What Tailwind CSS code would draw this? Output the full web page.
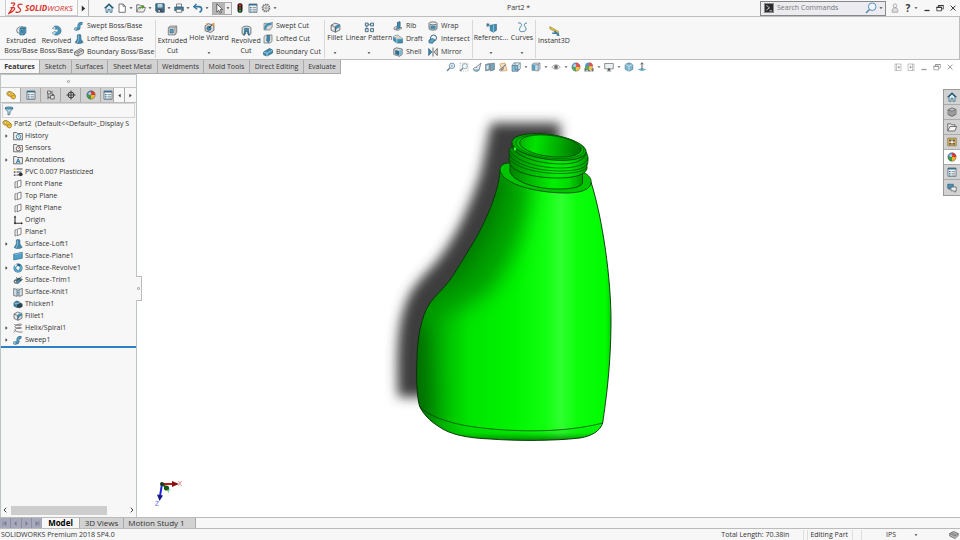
<!DOCTYPE html>
<html lang="en">
<head>
    <meta charset="UTF-8">
    <meta name="viewport" content="width=device-width, initial-scale=1.0">
    <title>Part2 * - SOLIDWORKS Premium 2018</title>
    <script src="https://cdn.jsdelivr.net/npm/@tailwindcss/browser@4"></script>
</head>
<body class="flex min-h-screen flex-col overflow-x-hidden bg-[#f7f7f7] font-['Open_Sans','Noto_Sans',sans-serif] text-[7px] leading-[10px] text-[#333]">

    <!-- Icon sprite -->
    <svg class="hidden">
        <symbol id="caret" viewBox="0 0 4 4"><path d="M.5 1.2h3L2 3z" fill="#444"/></symbol>
        <symbol id="right" viewBox="0 0 4 6"><path d="M.5 .5v5L3.5 3z" fill="#333"/></symbol>
        <symbol id="left" viewBox="0 0 4 6"><path d="M3.5 .5v5L.5 3z" fill="#333"/></symbol>
        <symbol id="home" viewBox="0 0 10 10"><path d="M2 5v4.300h2V6.500h2v2.800h2V5L5 2z" fill="#d9e8ef" stroke="#356b85" stroke-width=".8"/><path d="M.6 5.300 5 1l4.400 4.300" fill="none" stroke="#245a77" stroke-width="1.200"/></symbol>
        <symbol id="new" viewBox="0 0 10 10"><path d="M2 1h4l2.300 2.300V9.300H2z" fill="#fff" stroke="#555" stroke-width=".8"/><path d="M6 1v2.300h2.300" fill="none" stroke="#555" stroke-width=".7"/></symbol>
        <symbol id="open" viewBox="0 0 10 10"><path d="M.7 9V1.800h3l1 1h3V4.500" fill="#eee" stroke="#555" stroke-width=".8"/><path d="M.7 9 2.700 4.500h6.800L7.800 9z" fill="#eee" stroke="#555" stroke-width=".7"/><path d="M3.500 7c0-2.500 1-3.500 2.500-3.700V2L8.500 4 6 6V4.800c-1 .2-1.600 1-2.500 2.200z" fill="#4f9e2c"/></symbol>
        <symbol id="save" viewBox="0 0 10 10"><path d="M.8 .8h8.400v8.400H2L.8 8z" fill="#3e7390" stroke="#2b4a5c" stroke-width=".8"/><path d="M2.500 1h5v3.500h-5z" fill="#b7d3e1"/><path d="M2.800 6.200h4.500V9H2.800z" fill="#4b4b4b"/><path d="M3.500 6.900h1.200v2H3.500z" fill="#eee"/></symbol>
        <symbol id="print" viewBox="0 0 10 10"><path d="M2.500 1h5v3h-5z" fill="#fff" stroke="#555" stroke-width=".7"/><path d="M.6 4h8.800v3.700H.6z" fill="#3f81a3" stroke="#2d5469" stroke-width=".6"/><path d="M2.300 6.300h5.400v3H2.300z" fill="#fff" stroke="#555" stroke-width=".7"/></symbol>
        <symbol id="undo" viewBox="0 0 10 10"><path d="M3.500 1 .7 3.700l3.500 2.500" fill="none" stroke="#3277a3" stroke-width="1.400"/><path d="M1.300 3.600h4.500c3.600 0 3.800 4.200 .7 5.600" fill="none" stroke="#3277a3" stroke-width="1.600"/></symbol>
        <symbol id="cursor" viewBox="0 0 10 10"><path d="M3 .8v7.500l1.800-1.700 1.200 2.700 1.200-.6-1.200-2.600 2.300-.1z" fill="#fff" stroke="#444" stroke-width=".7"/></symbol>
        <symbol id="traffic" viewBox="0 0 10 10"><rect x="2.500" y=".3" width="5" height="9.400" rx="2" fill="#222"/><circle cx="5" cy="2.400" r="1.200" fill="#e22"/><circle cx="5" cy="5" r="1.100" fill="#665c22"/><circle cx="5" cy="7.600" r="1.200" fill="#3a3"/></symbol>
        <symbol id="list" viewBox="0 0 10 10"><path d="M1 1h8v8.300H1z" fill="#f4f4f4" stroke="#4e6673" stroke-width=".8"/><path d="M1 1h8v1.500H1z" fill="#3b6f8c"/><path d="M2 4h1.500v1H2zM2 5.800h1.500v1H2zM2 7.500h1.500v1H2z" fill="#2f79a3"/><path d="M4.500 4.500H8M4.500 6.300H8M4.500 8H8" stroke="#4e6673" stroke-width=".6"/></symbol>
        <symbol id="gear" viewBox="0 0 10 10"><circle cx="5" cy="5" r="3.600" fill="none" stroke="#777" stroke-width="1.500" stroke-dasharray="1.500 .7"/><circle cx="5" cy="5" r="3" fill="#f7f7f7" stroke="#777" stroke-width=".7"/><circle cx="5" cy="5" r="1.200" fill="none" stroke="#777" stroke-width=".8"/></symbol>
        <symbol id="magnifier" viewBox="0 0 12 12"><circle cx="7.200" cy="4.700" r="3.800" fill="#eef5fa" stroke="#5a8fb5" stroke-width="1"/><path d="M4.500 7.500 1 11" stroke="#5a8fb5" stroke-width="1.600"/></symbol>
        <symbol id="prompt" viewBox="0 0 10 10"><path d="M0 0h10v10H0z" fill="#8c8c8c"/><path d="M1 1h8v8H1z" fill="#2b2b2b"/><path d="m2.500 2.500 3 2.300-3 2.300M5.500 7.800h2.500" fill="none" stroke="#ddd" stroke-width=".9"/></symbol>
        <symbol id="user" viewBox="0 0 10 10"><circle cx="5" cy="2.800" r="1.900" fill="#eee" stroke="#999" stroke-width=".7"/><path d="M2.200 9.300V7c0-3 5.600-3 5.600 0v2.300z" fill="#ddd" stroke="#999" stroke-width=".7"/></symbol>
        <symbol id="min" viewBox="0 0 10 10"><path d="M2.500 7.500h5" stroke="currentColor" stroke-width="1.300"/></symbol>
        <symbol id="restore" viewBox="0 0 10 10"><path d="M3.500 4V2.500H8.300V6H6.500M1.800 4.300h4.700v3.500H1.800z" fill="none" stroke="currentColor" stroke-width=".8"/><path d="M1.500 4.300h5.300M3.200 2.500h5.300" stroke="currentColor" stroke-width="1.200"/></symbol>
        <symbol id="close" viewBox="0 0 10 10"><path d="m2.700 2.700 4.800 4.800m0-4.800L2.700 7.500" stroke="currentColor" stroke-width="1"/></symbol>
        <symbol id="dock-l" viewBox="0 0 10 10"><path d="M2 2h6v6.500H2zM3.500 2v6.500" fill="none" stroke="#aaa" stroke-width=".7"/><path d="M6.500 3.800v3L4.500 5.300z" fill="#888"/></symbol>
        <symbol id="dock-r" viewBox="0 0 10 10"><path d="M2 2h6v6.500H2zM6.500 2v6.500" fill="none" stroke="#aaa" stroke-width=".7"/><path d="M3.800 3.800v3l2-1.500z" fill="#888"/></symbol>

        <symbol id="extrude" viewBox="0 0 10 10"><path d="M.8 3.500 3 1.800h3v6H3.500L.8 6.500z" fill="#dfe9ee" stroke="#555" stroke-width=".6"/><path d="m3.500 3.300 1.700-1.600 3.800.4v5L7.300 9H3.500z" fill="#5aa3c4" stroke="#2d6380" stroke-width=".6"/><path d="M3.500 3.300h3.800L9 2.100M7.300 3.300V9" fill="none" stroke="#2d6380" stroke-width=".6"/><path d="M4.400 4.500h2v2.800h-2z" fill="#3b7fa1"/></symbol>
        <symbol id="revolve" viewBox="0 0 10 10"><path d="M3 1.200C7 0 9.600 3 9 6.200 8 9.800 3 10 1 7.300l2.600-1.500c1 1.200 2.700.9 2.900-.4.200-1.400-1-2-2.300-1.600z" fill="#4c98bd" stroke="#2d6380" stroke-width=".6"/><path d="M1 7.300 3.600 5.800l.8 1.500L2.500 9z" fill="#b9dbea"/><path d="M1 3 4 1.200 4.300 4z" fill="#d9ecf4" stroke="#2d6380" stroke-width=".4"/></symbol>
        <symbol id="sweep" viewBox="0 0 10 10"><path d="M1.700 8c3 .5 3.600-.8 3.300-2.800-.2-2.200 1-3 3.300-2.700" fill="none" stroke="#2d6380" stroke-width="3"/><path d="M1.700 7.900c3 .5 3.500-.8 3.300-2.800-.2-2 1-2.900 3.300-2.600" fill="none" stroke="#4c98bd" stroke-width="2"/><circle cx="1.700" cy="7.900" r="1.400" fill="#9acbe0" stroke="#2d6380" stroke-width=".5"/></symbol>
        <symbol id="loft" viewBox="0 0 10 10"><path d="M3.300 1c1-.7 2.600-.7 3.600 0v4l2.300 3.300c-2 1.700-6 1.700-8 .2L3.300 5z" fill="#4689ab" stroke="#2d6380" stroke-width=".6"/><path d="M4.500 1.500v4.300L3 9" fill="none" stroke="#8fc5dd" stroke-width=".8"/></symbol>
        <symbol id="boundary" viewBox="0 0 10 10"><path d="M.6 5 6.500 1.500 9.500 3v3L4 9 .6 7.800z" fill="#ddd" stroke="#555" stroke-width=".7"/><path d="M.6 5 4 6.300 9.500 3M4 6.300V9M2.500 4 6 5.200M4.500 2.800 8 4" fill="none" stroke="#555" stroke-width=".6"/></symbol>
        <symbol id="boundary-cut" viewBox="0 0 10 10"><path d="M.6 5 6.500 1.500 9.500 3v3L4 9 .6 7.800z" fill="#3f8db3" stroke="#245a77" stroke-width=".7"/><path d="M.6 5 4 6.300 9.500 3M4 6.300V9" fill="none" stroke="#c9e4ef" stroke-width=".7"/></symbol>
        <symbol id="cut" viewBox="0 0 10 10"><path d="M1.200 2.500 2.800 1h6v6L7.300 9H1.200z" fill="#e3e3e3" stroke="#666" stroke-width=".7"/><path d="M1.200 2.500h6L8.800 1M7.300 2.500V9" fill="none" stroke="#666" stroke-width=".6"/><path d="M2.700 4h3v3.300h-3z" fill="#5aa3c4" stroke="#2d6380" stroke-width=".6"/></symbol>
        <symbol id="hole" viewBox="0 0 10 10"><path d="M1 3.500 4 1.500l5 1.500v4.500L6 9.500 1 8z" fill="#d8d8d8" stroke="#555" stroke-width=".7"/><circle cx="4.500" cy="5.800" r="1.900" fill="#3f8db3" stroke="#245a77" stroke-width=".6"/><path d="M4.500 5.500 8.500 1.200" stroke="#333" stroke-width=".9"/><path d="m6.500 2 3-1.500v3zM2 .7l1.500 1L2 2.700z" fill="#e89a3c"/></symbol>
        <symbol id="revcut" viewBox="0 0 10 10"><path d="M1 2.500C2.500.6 7.500.6 9 2.500V8L6.800 9.300V6H3.200v3.300L1 8z" fill="#d5e5ed" stroke="#555" stroke-width=".7"/><path d="M3.200 3h3.600v3l1 3.300L6 8V5H4.300v3L2.300 9.300l.9-3.300z" fill="#3f8db3" stroke="#245a77" stroke-width=".5"/></symbol>
        <symbol id="sweptcut" viewBox="0 0 10 10"><path d="M1 2.300h7.500L9.200 1v5L7 9H1z" fill="#d8d8d8" stroke="#666" stroke-width=".6"/><path d="M2.200 8.500c0-4 1.500-5 6.300-5.800" fill="none" stroke="#3f8db3" stroke-width="2.200"/></symbol>
        <symbol id="loftcut" viewBox="0 0 10 10"><path d="M1 2.500 3 1h6v6.500L7 9H1z" fill="#e3e3e3" stroke="#666" stroke-width=".7"/><path d="M4 1.500h2.700V6l-1.300 2.700L3.700 7z" fill="#3f8db3" stroke="#245a77" stroke-width=".6"/></symbol>
        <symbol id="fillet" viewBox="0 0 10 10"><path d="M1 3 4.500 1 9 2.500v4.700L5 9.300 1 7.500z" fill="#e4e4e4" stroke="#555" stroke-width=".7"/><path d="M4.300 5.500c0-2 1.500-3.500 4.500-3v2.500C7 5 5.500 6 5 9L4.300 8z" fill="#3f8db3"/><path d="M1 3c1.500.7 3 1 4 2v4.300" fill="none" stroke="#555" stroke-width=".7"/></symbol>
        <symbol id="pattern" viewBox="0 0 10 10"><g fill="#d4e5ed" stroke="#3b6076" stroke-width=".8"><path d="M1.200 1h2.600v2.600H1.200zM1.200 6h2.600v2.800H1.200zM6 1h2.600v2.600H6zM6 6h2.600v2.800H6z"/></g><path d="M2.500 3.500V6M4 2.300h2" stroke="#3b6076" stroke-width=".6"/></symbol>
        <symbol id="rib" viewBox="0 0 10 10"><path d="M1 6.500 4.500 5V1.500L7 .8V6.500L9 7 5 9.500 1 8.300z" fill="#dcdcdc" stroke="#555" stroke-width=".6"/><path d="M4.500 1.500 7 .8V7l-4 1.500C4.500 7 4.500 4 4.500 1.500z" fill="#3f8db3" stroke="#245a77" stroke-width=".5"/></symbol>
        <symbol id="draft" viewBox="0 0 10 10"><path d="m.6 2.500 4-1.500L9.400 4.500V9H3.800L.6 6.500z" fill="#4390b6" stroke="#245a77" stroke-width=".6"/><path d="m.6 2.500 3.200 2.200h5.600M3.800 4.700V9" fill="none" stroke="#cfe6f0" stroke-width=".7"/><path d="M4.600 1 9.400 4.500H4L.6 2.500z" fill="#e3d3b8"/></symbol>
        <symbol id="shell" viewBox="0 0 10 10"><path d="M.8 2 3.500.8 9.200 2v5.500L6.500 9.300.8 7.500z" fill="#d9d9d9" stroke="#555" stroke-width=".7"/><path d="m2.200 3 4 .9v4.500L2.200 7z" fill="#2c6f93"/><path d="M6.200 3.900 9 2v5.300l-2.800 1.500z" fill="#7ab8d3"/></symbol>
        <symbol id="wrap" viewBox="0 0 10 10"><path d="M1 2.500v5.300c1 1.800 7 1.800 8 0V2.500z" fill="#bcd3de" stroke="#444" stroke-width=".7"/><ellipse cx="5" cy="2.400" rx="4" ry="1.500" fill="#eee" stroke="#444" stroke-width=".7"/><path d="M2.800 5.200h4.400v2.300H2.800z" fill="#3f8db3" stroke="#245a77" stroke-width=".4"/></symbol>
        <symbol id="intersect" viewBox="0 0 10 10"><circle cx="5.500" cy="4" r="3" fill="#f4f4f4" stroke="#356b85" stroke-width="1"/><path d="M1 6 4.500 4.500 7 6 4.500 9.300 1 8.800z" fill="#5aa3c4" stroke="#245a77" stroke-width=".7"/></symbol>
        <symbol id="mirror" viewBox="0 0 10 10"><path d="M.7 1.500v7L3.800 5z" fill="#3f8db3" stroke="#245a77" stroke-width=".7"/><path d="M9.300 1.500v7L6.200 5z" fill="#ddd" stroke="#444" stroke-width=".7"/><path d="M5 .5v9" stroke="#444" stroke-width=".8"/></symbol>
        <symbol id="refgeo" viewBox="0 0 10 10"><path d="m3.800 3 5.700-1v5.500L6.800 9.300 3.800 7.800z" fill="#3f8db3" stroke="#245a77" stroke-width=".5"/><path d="M6.800 2.500v6.800" stroke="#a7d0e2" stroke-width=".7"/><path d="M1.700.7v4M0 2.700h3.600M.5 1.500l2.500 2.400M3 1.500.5 3.900" stroke="#245a77" stroke-width=".6"/></symbol>
        <symbol id="curves" viewBox="0 0 10 10"><path d="M1 1c2.500-.5 4 .8 2.500 3C1.500 6.700 2 9 5 8.800c3.500-.2 3.800-2.800 2.300-4.600C6 2.500 6.500 1 9 1" fill="none" stroke="#3f81a3" stroke-width=".9"/></symbol>
        <symbol id="instant" viewBox="0 0 10 10"><path d="M.8 1.500 8.500 5.800v2L.8 3.500z" fill="#f2c53c" stroke="#7d661c" stroke-width=".5"/><path d="M3 7.500h4M5 5.500 8.800 9.300" stroke="#2f79a3" stroke-width="1.200"/><path d="m9.500 10-3-.5L9 7.300z" fill="#2f79a3"/></symbol>

        <symbol id="zoom" viewBox="0 0 10 10"><circle cx="6" cy="3.800" r="2.700" fill="#edf5f9" stroke="#56798d" stroke-width=".9"/><path d="M4 5.800 1 9" stroke="#56798d" stroke-width="1.500"/><path d="M4.800 3.800h2.500M6 2.600v2.500" stroke="#3f8db3" stroke-width=".6"/></symbol>
        <symbol id="zoomarea" viewBox="0 0 10 10"><path d="M1 1h8v8H1z" fill="none" stroke="#999" stroke-width=".7" stroke-dasharray="1.200 1"/><circle cx="5.800" cy="4.200" r="2.600" fill="#edf5f9" stroke="#7c929e" stroke-width=".9"/><path d="M3.800 6.200 1 9" stroke="#56798d" stroke-width="1.400"/></symbol>
        <symbol id="prevview" viewBox="0 0 10 10"><path d="M9 1 4 5.500M9 1 7 8H1.500c-1-1.500 1-3 3.500-2.500" fill="#e4eef3" stroke="#5a6e79" stroke-width=".9"/><path d="M2 8.500c2 1 4 .5 5-.5" fill="none" stroke="#3f8db3" stroke-width="1.200"/></symbol>
        <symbol id="section" viewBox="0 0 10 10"><path d="M.6 2.500 4.500 1.500v6.500L.6 8.800zM5.500 1.500l3.900-.3v6.500L5.500 9z" fill="#5a9aba" stroke="#444" stroke-width=".6"/><path d="M1.500 3.700 3.500 3v4l-2 .6z" fill="#d5e5ed"/></symbol>
        <symbol id="dynview" viewBox="0 0 10 10"><path d="M2 2 7 1l2 7.500L4 9z" fill="#f3dfbd" stroke="#d98b35" stroke-width=".8"/><path d="M1 8.500 8 2.500M2.500 9.300 6 6" stroke="#777" stroke-width="1.100"/></symbol>
        <symbol id="orient" viewBox="0 0 10 10"><path d="M1 3.500h5.800V9.300H1z" fill="#6fb0cf" stroke="#2d5469" stroke-width=".6"/><path d="m1 3.500 2-2.700h6.300v6L6.800 9.300V3.500z" fill="#d5e5ed" stroke="#2d5469" stroke-width=".6"/><path d="m6.800 3.500 2.500-2.700M4 1v6.500h5" fill="none" stroke="#2d5469" stroke-width=".5"/></symbol>
        <symbol id="style" viewBox="0 0 10 10"><path d="M1 2.300 3 1h6v6L7.300 9 1 8.300z" fill="#bcd9e6" stroke="#555" stroke-width=".6"/><path d="m1 2.300 3.200.5v6L1 8.300z" fill="#3f8db3"/><path d="M4.200 2.800h3L9 1M7.200 2.800V9" fill="none" stroke="#555" stroke-width=".6"/></symbol>
        <symbol id="eye" viewBox="0 0 10 10"><path d="M.8 5.200C3 2 7 2 9.200 5.200 7 8 3 8 .8 5.200z" fill="#eee" stroke="#888" stroke-width=".8"/><circle cx="5" cy="5" r="1.900" fill="#555"/></symbol>
        <symbol id="ball" viewBox="0 0 10 10"><circle cx="5" cy="5" r="4.200" fill="#3a7fc0"/><path d="M5 5V.8A4.200 4.200 0 0 1 9.200 5z" fill="#e0362c"/><path d="M5 5h4.200A4.200 4.200 0 0 1 5 9.200z" fill="#f0b429"/><path d="M5 5v4.200A4.200 4.200 0 0 1 .8 5z" fill="#3f9c3b"/><circle cx="3.800" cy="3.500" r="1.500" fill="#fff" fill-opacity=".6"/><circle cx="5" cy="5" r="4.200" fill="none" stroke="#555" stroke-width=".4"/></symbol>
        <symbol id="scene" viewBox="0 0 10 10"><path d="M.5 9.500V6h9v3.500z" fill="#555"/><path d="m1.500 9.500 1.500-2 1.500 2zM5.500 9.500 7 7.500l1.500 2z" fill="#ddd"/><circle cx="5" cy="4.300" r="3.900" fill="#3a7fc0"/><path d="M5 4.300V.4a3.900 3.900 0 0 1 3.900 3.900z" fill="#e0362c"/><path d="M5 4.300v3.900a3.900 3.900 0 0 1-3.900-3.900z" fill="#3f9c3b"/><path d="M5 4.300h3.900A3.900 3.900 0 0 1 5 8.200z" fill="#f0b429"/></symbol>
        <symbol id="monitor" viewBox="0 0 10 10"><path d="M.7 1.500h8.600v5.300H.7z" fill="#e8eef1" stroke="#666" stroke-width=".8"/><path d="M4 6.800h2v1.700H4zM2.700 9h4.600" stroke="#666" stroke-width=".8"/></symbol>
        <symbol id="cube" viewBox="0 0 10 10"><path d="m5 .8 3.800 1.700v4.800L5 9.200 1.200 7.300V2.500z" fill="#68aac8" stroke="#2d6380" stroke-width=".7"/><path d="M1.200 2.500 5 4.200l3.800-1.700M5 4.200v5" fill="none" stroke="#d9ecf4" stroke-width=".7"/></symbol>
        <symbol id="plane-up" viewBox="0 0 10 10"><path d="M.5 7.500 5 6l4.500 1.500L5 9.300z" fill="#5aa3c4"/><path d="M5 7.500V1M3.700 2.300 5 .7l1.300 1.600" fill="none" stroke="#444" stroke-width="1"/></symbol>

        <symbol id="part" viewBox="0 0 10 10"><path d="M1 4.500C.5 2.500 2.300 1 4 1.500L6 2.300 9 4.700c1 1.300.5 4.300-1.500 4.300L5.300 8 5 6.300 2.500 6z" fill="#f0bf33" stroke="#8a6a17" stroke-width=".7"/><circle cx="3.500" cy="3.600" r="1.100" fill="#fff6d8" stroke="#8a6a17" stroke-width=".5"/><path d="M5 6.300 8.500 5" stroke="#8a6a17" stroke-width=".6"/></symbol>
        <symbol id="config" viewBox="0 0 10 10"><path d="M1.500 1h3.200v2.800H1.500zM4.500 5.500h3.800v3.500H4.500z" fill="#ddd" stroke="#555" stroke-width=".8"/><path d="M2 3.800V9.300M2 7.300h2.500M6 1v3.500h2" fill="none" stroke="#555" stroke-width=".9"/></symbol>
        <symbol id="target" viewBox="0 0 10 10"><circle cx="5" cy="5" r="2.900" fill="none" stroke="#333" stroke-width="1"/><path d="M5 .5v9M.5 5h9" stroke="#333" stroke-width=".9"/></symbol>
        <symbol id="funnel" viewBox="0 0 10 10"><path d="M1 2.500 4 5.800V9l2-.8V5.800l3-3.300z" fill="#c8dfea" stroke="#356b85" stroke-width=".8"/><ellipse cx="5" cy="2" rx="4" ry="1.100" fill="#5aa3c4" stroke="#356b85" stroke-width=".7"/></symbol>
        <symbol id="f-history" viewBox="0 0 10 10"><path d="M.6 8.800V1.500h3l.8 1h5V8.800z" fill="#ededed" stroke="#555" stroke-width=".8"/><circle cx="5.500" cy="5.700" r="2.200" fill="#fff" stroke="#2f79a3" stroke-width=".9"/><path d="M5.500 4.500v1.400h1" fill="none" stroke="#2f79a3" stroke-width=".6"/></symbol>
        <symbol id="f-sensor" viewBox="0 0 10 10"><path d="M.6 8.800V1.500h3l.8 1h5V8.800z" fill="#ededed" stroke="#555" stroke-width=".8"/><circle cx="5.300" cy="5.700" r="2.100" fill="#fff" stroke="#555" stroke-width=".9"/><path d="M5.300 5.700 7 4.200" stroke="#c33" stroke-width=".9"/></symbol>
        <symbol id="f-annot" viewBox="0 0 10 10"><path d="M.6 8.800V1.500h3l.8 1h5V8.800z" fill="#ededed" stroke="#555" stroke-width=".8"/><path d="M3.400 8 5.200 3.700 7 8M4 6.700h2.400" fill="none" stroke="#2f79a3" stroke-width="1"/></symbol>
        <symbol id="material" viewBox="0 0 10 10"><path d="M3.500 2H9.500M3.500 5h5M3.500 8h3" stroke="#444" stroke-width="1"/><path d="M.8 1.200h1.700v1.700H.8z" fill="#e5a93c"/><path d="M.8 4.200h1.700v1.700H.8zM.8 7.200h1.700v1.700H.8z" fill="#666"/><circle cx="7.700" cy="7.300" r="1.900" fill="#333"/></symbol>
        <symbol id="plane" viewBox="0 0 10 10"><path d="M3.500 2.500 2 3v6l1.500-.5" fill="none" stroke="#666" stroke-width=".8"/><path d="M4.300 2.200 8 1v6.300L4.300 8.700z" fill="#fbfbfb" stroke="#666" stroke-width=".8"/></symbol>
        <symbol id="origin" viewBox="0 0 10 10"><path d="M2 1.500v6.700h7" fill="none" stroke="#333" stroke-width="1.100"/><path d="M.8 2.500 2 .5l1.200 2zM8 7l2 1.200-2 1.200z" fill="#333"/><circle cx="2" cy="8.200" r="1" fill="#333"/></symbol>
        <symbol id="surfplane" viewBox="0 0 10 10"><path d="M.7 3 9.300 1.300v5.900L.7 9z" fill="#4c9fc6" stroke="#2d6380" stroke-width=".6"/><path d="M1.500 3.700 8.500 2.200" stroke="#a7d4e6" stroke-width=".6"/></symbol>
        <symbol id="surfrev" viewBox="0 0 10 10"><circle cx="5" cy="5" r="3.200" fill="none" stroke="#2d6380" stroke-width="2.600"/><circle cx="5" cy="5" r="3.200" fill="none" stroke="#5aa9cc" stroke-width="1.800" stroke-dasharray="14 3"/><path d="M1 1.300 4.300 1.500 2.500 4z" fill="#f7f7f7"/></symbol>
        <symbol id="trim" viewBox="0 0 10 10"><path d="M1 5.500 6 3l3.500 1.500L5 8.500 1.500 8z" fill="#4390b6" stroke="#444" stroke-width=".6"/><path d="M3 2.500 8 6M2.500 6.500 8.500 2" stroke="#444" stroke-width=".9"/><circle cx="2.500" cy="6.700" r="1.100" fill="#eee" stroke="#444" stroke-width=".6"/></symbol>
        <symbol id="knit" viewBox="0 0 10 10"><path d="M.7 1.500 4 2.500v6.800L.7 8.500zM9.300 1.500 6 2.500v6.800l3.300-.8z" fill="#d5e5ed" stroke="#555" stroke-width=".7"/><path d="M5 1.500v8" stroke="#2f79a3" stroke-width="1.200" stroke-dasharray="1 .7"/></symbol>
        <symbol id="thicken" viewBox="0 0 10 10"><path d="M1 3.500 4 2l3 1.500V7L4 8.500 1 7z" fill="#3f8db3" stroke="#2c4552" stroke-width=".7"/><path d="m4 5.200 3-1.500 2.500 1v3L6.500 9.300 4 8.300z" fill="#2c4552"/><path d="M1 3.500 4 5l3-1.500" fill="none" stroke="#cfe6f0" stroke-width=".6"/></symbol>
        <symbol id="helix" viewBox="0 0 10 10"><path d="M1 1c1 1.500 7.500 2 7.500.7S3 1.200 2 3.300s6.500 3 6.500 1.700S3 4.500 2 6.500s5.500 3.200 7.500 2.300M.7 9.300 2.500 7.500" fill="none" stroke="#666" stroke-width=".8"/></symbol>
        <symbol id="folder" viewBox="0 0 10 10"><path d="M.8 9V1.800h3l.8 1H8v1.700" fill="#eee" stroke="#555" stroke-width=".8"/><path d="M.8 9 3 4.500h6.700L7.800 9z" fill="#f5f5f5" stroke="#555" stroke-width=".8"/></symbol>
        <symbol id="library" viewBox="0 0 10 10"><path d="m1 2.800 4-2 4 1.700v4.800L5 9.300 1 7.500z" fill="#bbb" stroke="#555" stroke-width=".7"/><path d="M1 2.800 5 4.300l4-1.800M5 4.300v5M3 3.500v5M7 3.500v5" fill="none" stroke="#555" stroke-width=".6"/></symbol>
        <symbol id="palette" viewBox="0 0 10 10"><path d="M.8 1.200h8.400v7.600H.8z" fill="#e5c169" stroke="#7a6429" stroke-width=".7"/><path d="M2 2.500h2.500v2H2zM5.500 2.500H8v2H5.500zM2 6h2.500v1.700H2zM5.500 6H8v1.700H5.500z" fill="#666"/><path d="M4 4.200h2v1.600H4z" fill="#fff"/></symbol>
        <symbol id="forum" viewBox="0 0 10 10"><path d="M.7 1.200h5.600v4H3.500L2 6.700V5.200H.7z" fill="#4690b5" stroke="#2d5469" stroke-width=".6"/><path d="M4 4h5.300v3.800H8.200v1.500L6.700 7.800H4z" fill="#e7eef2" stroke="#555" stroke-width=".7"/></symbol>
    </svg>

    <!-- Title bar -->
    <header class="flex h-[17px] items-center border-b border-[#bdbdbd] pl-[5px]">
        <div class="flex h-4 w-[73px] items-center gap-px border border-t-0 border-[#ccc] bg-[#fafafa] pl-[2px] text-[#d9322b]">
            <svg class="h-[14px] w-4 shrink-0" viewBox="0 0 16 14" fill="none" stroke="#d9322b" stroke-width="1.300"><path d="M3 2.300c3.500-1.300 5 .2 2 2.700M2.500 6.800C6.500 5.500 8 7.500 5 10c-1.200 1-3 2-4.200 2.500L4.500 7"/><path d="M14.500 3.500C12 2.500 9.500 3.500 10 5.500c.5 1.500 3.500 2 2.500 4.200-.8 1.600-3 1.800-5 1.300"/></svg>
            <span class="text-[8px] italic"><b>SOLID</b>WORKS</span>
        </div>
        <button class="flex w-[11px] items-center justify-center self-stretch border-r border-[#bbb]" aria-label="Menu"><svg class="h-[7px] w-[5px]"><use href="#right"/></svg></button>
        <nav class="ml-[15px] flex items-center gap-[3px]">
            <button aria-label="Home"><svg class="size-[10px]"><use href="#home"/></svg></button>
            <button class="flex items-center gap-[2px]" aria-label="New"><svg class="size-[10px]"><use href="#new"/></svg><svg class="size-1"><use href="#caret"/></svg></button>
            <button class="flex items-center gap-[2px]" aria-label="Open"><svg class="size-[10px]"><use href="#open"/></svg><svg class="size-1"><use href="#caret"/></svg></button>
            <button class="flex items-center gap-[2px]" aria-label="Save"><svg class="size-[10px]"><use href="#save"/></svg><svg class="size-1"><use href="#caret"/></svg></button>
            <button class="flex items-center gap-[2px]" aria-label="Print"><svg class="size-[10px]"><use href="#print"/></svg><svg class="size-1"><use href="#caret"/></svg></button>
            <button class="flex items-center gap-[2px]" aria-label="Undo"><svg class="size-[10px]"><use href="#undo"/></svg><svg class="size-1"><use href="#caret"/></svg></button>
            <button class="flex h-[13px] items-center border border-[#aaa] bg-[#f0f0f0]" aria-label="Select"><span class="bg-[#b5b5b5]"><svg class="h-[11px] w-3"><use href="#cursor"/></svg></span><svg class="mx-px size-1"><use href="#caret"/></svg></button>
            <button aria-label="Rebuild"><svg class="size-[10px]"><use href="#traffic"/></svg></button>
            <button aria-label="File properties"><svg class="size-[10px]"><use href="#list"/></svg></button>
            <button class="flex items-center gap-[2px]" aria-label="Options"><svg class="size-[10px]"><use href="#gear"/></svg><svg class="size-1"><use href="#caret"/></svg></button>
        </nav>
        <h1 class="flex-1 text-center">Part2 *</h1>
        <div class="flex h-[15px] w-[126px] items-center border border-[#888] bg-[#ebebf0] pl-[3px]">
            <svg class="size-[10px] shrink-0"><use href="#prompt"/></svg>
            <input type="text" aria-label="Search Commands" placeholder="Search Commands" class="ml-[3px] min-w-0 flex-1 bg-transparent placeholder:text-[#777] outline-none">
            <button class="flex h-full items-center gap-[2px] px-[2px]" aria-label="Search"><svg class="size-3"><use href="#magnifier"/></svg><svg class="size-1"><use href="#caret"/></svg></button>
        </div>
        <div class="ml-1 flex items-center gap-[3px] pr-[2px]">
            <button aria-label="Login"><svg class="size-[10px]"><use href="#user"/></svg></button>
            <button class="flex items-center text-[10px] font-bold" aria-label="Help"><span class="w-[10px]">?</span><svg class="mx-px size-1"><use href="#caret"/></svg></button>
            <button aria-label="Minimize"><svg class="size-[10px]"><use href="#min"/></svg></button>
            <button aria-label="Restore"><svg class="size-[10px]"><use href="#restore"/></svg></button>
            <button aria-label="Close"><svg class="size-[10px]"><use href="#close"/></svg></button>
        </div>
    </header>

    <!-- Ribbon -->
    <section class="flex h-[43px] items-stretch border-r border-b border-[#bdbdbd] pt-[3px] pb-px whitespace-nowrap">
        <div class="flex border-r border-[#d8d8d8] pl-[3px]">
            <button class="flex w-9 flex-col items-center pt-[5px]"><svg class="size-[11px] shrink-0"><use href="#extrude"/></svg><span>Extruded<br>Boss/Base</span></button>
            <button class="flex w-[35px] flex-col items-center pt-[5px]"><svg class="size-[11px] shrink-0"><use href="#revolve"/></svg><span>Revolved<br>Boss/Base</span></button>
            <div class="grid w-[81px] grid-rows-3">
                <button class="flex items-center gap-[3px]"><svg class="size-[10px]"><use href="#sweep"/></svg>Swept Boss/Base</button>
                <button class="flex items-center gap-[3px]"><svg class="size-[10px]"><use href="#loft"/></svg>Lofted Boss/Base</button>
                <button class="flex items-center gap-[3px]"><svg class="size-[10px]"><use href="#boundary"/></svg>Boundary Boss/Base</button>
            </div>
        </div>
        <div class="flex border-r border-[#d8d8d8]">
            <button class="flex w-[33px] flex-col items-center pt-[5px]"><svg class="size-[11px] shrink-0"><use href="#cut"/></svg><span>Extruded<br>Cut</span></button>
            <button class="flex w-10 flex-col items-center pt-[2px]"><svg class="size-[11px] shrink-0"><use href="#hole"/></svg><span>Hole Wizard</span><svg class="mt-2 size-1"><use href="#caret"/></svg></button>
            <button class="flex w-[34px] flex-col items-center pt-[5px]"><svg class="size-[11px] shrink-0"><use href="#revcut"/></svg><span>Revolved<br>Cut</span></button>
            <div class="grid w-[61px] grid-rows-3">
                <button class="flex items-center gap-[3px]"><svg class="size-[10px]"><use href="#sweptcut"/></svg>Swept Cut</button>
                <button class="flex items-center gap-[3px]"><svg class="size-[10px]"><use href="#loftcut"/></svg>Lofted Cut</button>
                <button class="flex items-center gap-[3px]"><svg class="size-[10px]"><use href="#boundary-cut"/></svg>Boundary Cut</button>
            </div>
        </div>
        <div class="flex border-r border-[#d8d8d8]">
            <button class="flex w-5 flex-col items-center pt-[2px]"><svg class="size-[11px] shrink-0"><use href="#fillet"/></svg><span>Fillet</span><svg class="mt-2 size-1"><use href="#caret"/></svg></button>
            <button class="flex w-12 flex-col items-center pt-[2px]"><svg class="size-[11px] shrink-0"><use href="#pattern"/></svg><span>Linear Pattern</span><svg class="mt-2 size-1"><use href="#caret"/></svg></button>
            <div class="grid w-[35px] grid-rows-3">
                <button class="flex items-center gap-[3px]"><svg class="size-[10px]"><use href="#rib"/></svg>Rib</button>
                <button class="flex items-center gap-[3px]"><svg class="size-[10px]"><use href="#draft"/></svg>Draft</button>
                <button class="flex items-center gap-[3px]"><svg class="size-[10px]"><use href="#shell"/></svg>Shell</button>
            </div>
            <div class="grid w-[44px] grid-rows-3">
                <button class="flex items-center gap-[3px]"><svg class="size-[10px]"><use href="#wrap"/></svg>Wrap</button>
                <button class="flex items-center gap-[3px]"><svg class="size-[10px]"><use href="#intersect"/></svg>Intersect</button>
                <button class="flex items-center gap-[3px]"><svg class="size-[10px]"><use href="#mirror"/></svg>Mirror</button>
            </div>
        </div>
        <div class="flex border-r border-[#d8d8d8]">
            <button class="flex w-9 flex-col items-center pt-[2px]"><svg class="size-[11px] shrink-0"><use href="#refgeo"/></svg><span>Referenc...</span><svg class="mt-2 size-1"><use href="#caret"/></svg></button>
            <button class="flex w-[26px] flex-col items-center pt-[2px]"><svg class="size-[11px] shrink-0"><use href="#curves"/></svg><span>Curves</span><svg class="mt-2 size-1"><use href="#caret"/></svg></button>
        </div>
        <button class="flex w-9 flex-col items-center pt-[5px]"><svg class="size-[11px] shrink-0"><use href="#instant"/></svg>Instant3D</button>
    </section>

    <!-- Command tabs and view toolbar -->
    <div class="flex h-[14px] items-center bg-white whitespace-nowrap">
        <nav class="flex h-full divide-x divide-[#aaa] border-r border-b border-[#aaa] bg-[#d2d2d2]">
            <button class="w-10 bg-[#f7f7f7] font-bold">Features</button>
            <button class="w-8">Sketch</button>
            <button class="w-9">Surfaces</button>
            <button class="w-[50px]">Sheet Metal</button>
            <button class="w-[46px]">Weldments</button>
            <button class="w-[46px]">Mold Tools</button>
            <button class="w-[54px]">Direct Editing</button>
            <button class="w-9">Evaluate</button>
        </nav>
        <div class="ml-[105px] flex items-center gap-[3px] opacity-85">
            <button aria-label="Zoom to fit"><svg class="size-[10px]"><use href="#zoom"/></svg></button>
            <button aria-label="Zoom to area"><svg class="size-[10px]"><use href="#zoomarea"/></svg></button>
            <button aria-label="Previous view"><svg class="size-[10px]"><use href="#prevview"/></svg></button>
            <button aria-label="Section view"><svg class="size-[10px]"><use href="#section"/></svg></button>
            <button aria-label="Dynamic annotation views"><svg class="size-[10px]"><use href="#dynview"/></svg></button>
            <button class="flex items-center gap-[3px]" aria-label="View orientation"><svg class="size-[10px]"><use href="#orient"/></svg><svg class="size-1"><use href="#caret"/></svg></button>
            <button class="flex items-center gap-[3px]" aria-label="Display style"><svg class="size-[10px]"><use href="#style"/></svg><svg class="size-1"><use href="#caret"/></svg></button>
            <button class="flex items-center gap-[3px]" aria-label="Hide or show items"><svg class="size-[10px]"><use href="#eye"/></svg><svg class="size-1"><use href="#caret"/></svg></button>
            <button aria-label="Edit appearance"><svg class="size-[10px]"><use href="#ball"/></svg></button>
            <button class="flex items-center gap-[3px]" aria-label="Apply scene"><svg class="size-[10px]"><use href="#scene"/></svg><svg class="size-1"><use href="#caret"/></svg></button>
            <button class="flex items-center gap-[3px]" aria-label="View settings"><svg class="size-[10px]"><use href="#monitor"/></svg><svg class="size-1"><use href="#caret"/></svg></button>
            <button aria-label="3D view"><svg class="size-[10px]"><use href="#cube"/></svg></button>
            <button aria-label="Normal to"><svg class="size-[10px]"><use href="#plane-up"/></svg></button>
        </div>
        <div class="ml-auto flex items-center gap-[3px] pr-[5px] text-[#999]">
            <button aria-label="Dock left"><svg class="size-[10px]"><use href="#dock-l"/></svg></button>
            <button aria-label="Dock right"><svg class="size-[10px]"><use href="#dock-r"/></svg></button>
            <button aria-label="Minimize document"><svg class="size-[10px]"><use href="#min"/></svg></button>
            <button aria-label="Restore document"><svg class="size-[10px]"><use href="#restore"/></svg></button>
            <button aria-label="Close document"><svg class="size-[10px]"><use href="#close"/></svg></button>
        </div>
    </div>

    <div class="flex flex-1 bg-white">
        <!-- Feature manager -->
        <aside class="relative flex w-[137px] shrink-0 flex-col border-t border-r border-l border-[#bcc4c4] bg-[#f7f7f7] whitespace-nowrap">
            <div class="flex h-[13px] items-center justify-center border-b border-[#c4c4c4]"><span class="size-[3px] rounded-full border border-[#999]"></span></div>
            <nav class="flex h-[15px] divide-x divide-[#aaa] border-b border-[#bbb] bg-[#d2d2d2]">
                <button class="flex w-5 items-center justify-center bg-[#f7f7f7]" aria-label="FeatureManager"><svg class="size-[10px]"><use href="#part"/></svg></button>
                <button class="flex w-5 items-center justify-center" aria-label="PropertyManager"><svg class="size-[10px]"><use href="#list"/></svg></button>
                <button class="flex w-5 items-center justify-center" aria-label="ConfigurationManager"><svg class="size-[10px]"><use href="#config"/></svg></button>
                <button class="flex w-5 items-center justify-center" aria-label="DimXpertManager"><svg class="size-[10px]"><use href="#target"/></svg></button>
                <button class="flex w-5 items-center justify-center" aria-label="DisplayManager"><svg class="size-[10px]"><use href="#ball"/></svg></button>
                <button class="flex w-[13px] items-center justify-end overflow-hidden" aria-label="CAM"><svg class="size-[10px] shrink-0"><use href="#list"/></svg></button>
                <button class="flex w-[11px] items-center justify-center bg-[#f7f7f7]" aria-label="Previous tabs"><svg class="h-[5px] w-[3px]"><use href="#left"/></svg></button>
                <button class="flex flex-1 items-center justify-center bg-[#f7f7f7]" aria-label="Next tabs"><svg class="h-[5px] w-[3px]"><use href="#right"/></svg></button>
            </nav>
            <button class="mx-px flex h-[15px] items-center border border-[#d4d4d4] pl-px" aria-label="Filter"><svg class="size-[10px]"><use href="#funnel"/></svg></button>
            <div class="flex h-3 items-center gap-[2px] overflow-hidden pl-px"><svg class="size-[10px] shrink-0"><use href="#part"/></svg><span class="whitespace-pre">Part2  (Default&lt;&lt;Default&gt;_Display S</span></div>
            <ul class="border-b-2 border-[#2f7fc4]">
                <li class="flex h-3 items-center gap-[2px] pl-1"><svg class="mr-[3px] h-1 w-[3px]"><use href="#right"/></svg><svg class="size-[10px]"><use href="#f-history"/></svg>History</li>
                <li class="flex h-3 items-center gap-[2px] pl-3"><svg class="size-[10px]"><use href="#f-sensor"/></svg>Sensors</li>
                <li class="flex h-3 items-center gap-[2px] pl-1"><svg class="mr-[3px] h-1 w-[3px]"><use href="#right"/></svg><svg class="size-[10px]"><use href="#f-annot"/></svg>Annotations</li>
                <li class="flex h-3 items-center gap-[2px] pl-3"><svg class="size-[10px]"><use href="#material"/></svg>PVC 0.007 Plasticized</li>
                <li class="flex h-3 items-center gap-[2px] pl-3"><svg class="size-[10px]"><use href="#plane"/></svg>Front Plane</li>
                <li class="flex h-3 items-center gap-[2px] pl-3"><svg class="size-[10px]"><use href="#plane"/></svg>Top Plane</li>
                <li class="flex h-3 items-center gap-[2px] pl-3"><svg class="size-[10px]"><use href="#plane"/></svg>Right Plane</li>
                <li class="flex h-3 items-center gap-[2px] pl-3"><svg class="size-[10px]"><use href="#origin"/></svg>Origin</li>
                <li class="flex h-3 items-center gap-[2px] pl-3"><svg class="size-[10px]"><use href="#plane"/></svg>Plane1</li>
                <li class="flex h-3 items-center gap-[2px] pl-1"><svg class="mr-[3px] h-1 w-[3px]"><use href="#right"/></svg><svg class="size-[10px]"><use href="#loft"/></svg>Surface-Loft1</li>
                <li class="flex h-3 items-center gap-[2px] pl-3"><svg class="size-[10px]"><use href="#surfplane"/></svg>Surface-Plane1</li>
                <li class="flex h-3 items-center gap-[2px] pl-1"><svg class="mr-[3px] h-1 w-[3px]"><use href="#right"/></svg><svg class="size-[10px]"><use href="#surfrev"/></svg>Surface-Revolve1</li>
                <li class="flex h-3 items-center gap-[2px] pl-3"><svg class="size-[10px]"><use href="#trim"/></svg>Surface-Trim1</li>
                <li class="flex h-3 items-center gap-[2px] pl-3"><svg class="size-[10px]"><use href="#knit"/></svg>Surface-Knit1</li>
                <li class="flex h-3 items-center gap-[2px] pl-3"><svg class="size-[10px]"><use href="#thicken"/></svg>Thicken1</li>
                <li class="flex h-3 items-center gap-[2px] pl-3"><svg class="size-[10px]"><use href="#fillet"/></svg>Fillet1</li>
                <li class="flex h-3 items-center gap-[2px] pl-1"><svg class="mr-[3px] h-1 w-[3px]"><use href="#right"/></svg><svg class="size-[10px]"><use href="#helix"/></svg>Helix/Spiral1</li>
                <li class="flex h-3 items-center gap-[2px] pl-1"><svg class="mr-[3px] h-1 w-[3px]"><use href="#right"/></svg><svg class="size-[10px]"><use href="#sweep"/></svg>Sweep1</li>
            </ul>
            <div class="mt-auto flex h-[14px] items-center px-[2px]">
                <svg class="h-[6px] w-1" viewBox="0 0 4 6"><path d="M3.300 .7 1 3l2.300 2.300" fill="none" stroke="#444"/></svg>
                <div class="flex flex-1 px-1"><span class="h-[9px] w-5/6 bg-[#cdcdcd]"></span></div>
                <svg class="h-[6px] w-1" viewBox="0 0 4 6"><path d="M.7 .7 3 3 .7 5.300" fill="none" stroke="#444"/></svg>
            </div>
            <button class="absolute top-[201px] -right-[6px] flex h-[25px] w-[6px] items-center justify-center border border-l-0 border-[#bbb] bg-[#f7f7f7]" aria-label="Collapse panel"><span class="size-[3px] rounded-full border border-[#999]"></span></button>
        </aside>

        <!-- Graphics area -->
        <main class="relative min-w-0 flex-1">
            <svg class="size-full" viewBox="137 74 806 443">
                <defs>
                    <linearGradient id="body" gradientUnits="userSpaceOnUse" x1="416" y1="0" x2="612" y2="0">
                        <stop offset="0" stop-color="#007c00"/><stop offset=".08" stop-color="#00a000"/><stop offset=".17" stop-color="#00c400"/><stop offset=".27" stop-color="#00e400"/><stop offset=".5" stop-color="#00f400"/><stop offset=".66" stop-color="#10ff10"/><stop offset=".74" stop-color="#30ff30"/><stop offset=".82" stop-color="#0cff0c"/><stop offset=".97" stop-color="#00fa00"/><stop offset="1" stop-color="#00c800"/>
                    </linearGradient>
                    <linearGradient id="neck" x1="0" x2="1"><stop offset="0" stop-color="#008000"/><stop offset=".25" stop-color="#00b400"/><stop offset=".6" stop-color="#00f000"/><stop offset=".8" stop-color="#00dc00"/><stop offset="1" stop-color="#009800"/></linearGradient>
                    <linearGradient id="bore" x1="0" x2="1"><stop offset="0" stop-color="#00b400"/><stop offset=".25" stop-color="#00e400"/><stop offset=".6" stop-color="#00b000"/><stop offset="1" stop-color="#007000"/></linearGradient>
                    <linearGradient id="base" gradientUnits="userSpaceOnUse" x1="0" y1="424" x2="0" y2="442"><stop offset="0" stop-color="#008400" stop-opacity="0"/><stop offset=".5" stop-color="#008400" stop-opacity=".15"/><stop offset="1" stop-color="#007000"/></linearGradient>
                    <filter id="soft" x="-30%" y="-30%" width="160%" height="160%"><feGaussianBlur stdDeviation="6"/></filter>
                    <filter id="softer" x="-50%" y="-50%" width="200%" height="200%"><feGaussianBlur stdDeviation="10"/></filter>
                    <clipPath id="outline"><path d="M500 170C499 192 485 223 473 243 464 258 456 271 450 280 443 289 435 296 430 303 421 316 417 340 417 360 416 380 417 396 419.500 406 423 414 430 421 438 426 450 435 468 438 490 439 515 441 555 441 580 438 592 436 600 431 602.700 423 606 400 611 365 611 320 611 280 603 220 591 182 560 160 520 160 500 170z"/></clipPath>
                </defs>
                <path d="M491 123H560V180L500 330 440 397H398C396 350 398 322 406 303 411 287 424 276 436 262 455 240 470 205 480 175 484 160 487 140 491 123z" fill="#3c3c3c" filter="url(#soft)"/>
                <g clip-path="url(#outline)">
                    <path d="M410 150H615V445H410z" fill="url(#body)"/>
                    <path d="M480 150 532 180C528 220 518 252 496 284 478 304 455 314 410 322L390 300 450 255z" fill="#009c00" filter="url(#softer)" opacity=".95"/>
                    <path d="M470 160 505 170C500 215 484 246 462 274L415 305 410 290z" fill="#006400" filter="url(#softer)" opacity=".7"/>
                    <path d="M395 330H426L434 425H395z" fill="#006400" filter="url(#softer)" opacity=".6"/>
                    <path d="M419 406C430 418 455 425 480 428 510 431 560 433 603 423V445H415z" fill="url(#base)"/>
                </g>
                <path d="M500 170C499 192 485 223 473 243 464 258 456 271 450 280 443 289 435 296 430 303 421 316 417 340 417 360 416 380 417 396 419.500 406 423 414 430 421 438 426 450 435 468 438 490 439 515 441 555 441 580 438 592 436 600 431 602.700 423 606 400 611 365 611 320 611 280 603 220 591 182" fill="none" stroke="#0a2a0a" stroke-width=".9"/>
                <path d="M419.500 406C428 417 455 425 480 427.700 515 432 565 433 602.700 423" fill="none" stroke="#063806" stroke-width=".7"/>
                <!-- shoulder, neck and threads -->
                <path d="M500 170C500 165 504 163 510 163L583 172C589 175 592 179 591 183 590 190 580 193 566 193 536 193 502 184 500 170z" fill="#00c400" stroke="#063806" stroke-width=".8"/>
                <path d="M510 163V172C514 182 536 189 558 189 572 189 581 187 582.500 183V168z" fill="url(#neck)" stroke="#063806" stroke-width=".8"/>
                <path d="M511 147C508 150 509 154 510 156 508 158 509 162 511 166 518 174 538 178 558 178 574 178 585 175 587 169V165C589 160 588 155 586 152z" fill="url(#neck)" stroke="#063806" stroke-width=".8"/>
                <path d="M510 151C516 161 538 168 560 168 575 168 586 165 588 158M510 156C518 166 540 171 560 171 575 171 585 169 588 163M509 159C518 169 540 173.500 560 173.500 575 173.500 585 171 587 167" fill="none" stroke="#064806" stroke-width=".7"/>
                <path d="M512 143C510 152 528 163 560 164 575 164 585 161 586 152z" fill="url(#neck)" stroke="#063806" stroke-width=".7"/>
                <ellipse cx="549" cy="147" rx="37.500" ry="12.500" transform="rotate(8 549 147)" fill="#00a800" stroke="#063806" stroke-width=".8"/>
                <ellipse cx="550" cy="146.500" rx="34" ry="11.500" transform="rotate(7 550 146.500)" fill="#00c000" stroke="#064806" stroke-width=".5"/>
                <ellipse cx="550.500" cy="146" rx="31" ry="10.500" transform="rotate(7 550.500 146)" fill="url(#bore)" stroke="#063806" stroke-width=".7"/>
                <path d="M514 147.500h2v3h-2z" fill="#2cff2c"/>
            </svg>
            <!-- Axis triad -->
            <svg class="absolute bottom-[10px] left-[17px] h-[30px] w-[30px]" viewBox="0 0 30 30">
                <path d="M8 7h13" stroke="#c01818" stroke-width="2"/><path d="M18 4 25 7l-7 3z" fill="#8c1010"/>
                <path d="M8 7 6 19" stroke="#2424d8" stroke-width="2"/><path d="M3 17.500 9 18.500 5.500 24z" fill="#18188c"/>
                <path d="m8 7 5 4" stroke="#186018" stroke-width="2"/><circle cx="12.500" cy="11" r="2.600" fill="#145c14"/>
                <circle cx="8" cy="7" r="2" fill="#1d3a1d"/>
                <text x="24" y="9" font-size="7" fill="#e66">X</text><text x="1" y="29" font-size="7" fill="#66e">Z</text><text x="13" y="16" font-size="5" fill="#2a2">Y</text>
            </svg>
        </main>

        <!-- Task pane -->
        <nav class="mt-[15px] flex w-[17px] shrink-0 flex-col divide-y divide-[#aaa] self-start border border-r-0 border-[#999] bg-[#d2d2d2]">
            <button class="flex h-[15px] items-center justify-center" aria-label="Resources"><svg class="size-[10px]"><use href="#home"/></svg></button>
            <button class="flex h-[15px] items-center justify-center" aria-label="Design Library"><svg class="size-[10px]"><use href="#library"/></svg></button>
            <button class="flex h-[15px] items-center justify-center" aria-label="File Explorer"><svg class="size-[10px]"><use href="#folder"/></svg></button>
            <button class="flex h-[15px] items-center justify-center" aria-label="View Palette"><svg class="size-[10px]"><use href="#palette"/></svg></button>
            <button class="flex h-[15px] items-center justify-center bg-white" aria-label="Appearances"><svg class="size-[10px]"><use href="#ball"/></svg></button>
            <button class="flex h-[15px] items-center justify-center" aria-label="Custom Properties"><svg class="size-[10px]"><use href="#list"/></svg></button>
            <button class="flex h-[15px] items-center justify-center" aria-label="Forum"><svg class="size-[10px]"><use href="#forum"/></svg></button>
        </nav>
    </div>

    <!-- Model tabs -->
    <div class="flex h-3 border-y border-[#bbb] text-[8px] whitespace-nowrap">
        <div class="flex w-[42px] items-center divide-x divide-[#8b8ea3] self-stretch bg-[#a7a9bb]">
            <button class="flex h-full flex-1 items-center justify-center" aria-label="First"><svg class="h-[5px] w-[5px]" viewBox="0 0 5 5"><path d="M1 0v5M4 .5 2 2.500l2 2z" fill="#777b93" stroke="#777b93" stroke-width=".7"/></svg></button>
            <button class="flex h-full flex-1 items-center justify-center" aria-label="Previous"><svg class="h-[5px] w-[5px]" viewBox="0 0 5 5"><path d="M3.500 0v5L1 2.500z" fill="#777b93"/></svg></button>
            <button class="flex h-full flex-1 items-center justify-center" aria-label="Next"><svg class="h-[5px] w-[5px]" viewBox="0 0 5 5"><path d="M1.500 0v5L4 2.500z" fill="#777b93"/></svg></button>
            <button class="flex h-full flex-1 items-center justify-center" aria-label="Last"><svg class="h-[5px] w-[5px]" viewBox="0 0 5 5"><path d="M4 0v5M1 .5l2 2-2 2z" fill="#777b93" stroke="#777b93" stroke-width=".7"/></svg></button>
        </div>
        <button class="w-[37px] font-bold text-black">Model</button>
        <button class="w-[45px] border-x border-[#aaa] bg-[#d2d2d2]">3D Views</button>
        <button class="w-[72px] border-r border-[#aaa] bg-[#d2d2d2] pr-[6px]">Motion Study 1</button>
    </div>

    <!-- Status bar -->
    <footer class="flex h-[11px] items-center pl-px whitespace-nowrap">
        <span>SOLIDWORKS Premium 2018 SP4.0</span>
        <span class="ml-auto border-r border-[#ddd] pr-[14px]">Total Length: 70.38in</span>
        <span class="ml-[3px] border-x border-[#ddd] pr-1 pl-[2px]">Editing Part</span>
        <span class="ml-2 flex w-[88px] items-center border-l border-[#ddd] pl-6">IPS<svg class="ml-[18px] size-1"><use href="#caret"/></svg></span>
        <svg class="mr-px size-[10px]" viewBox="0 0 10 10"><path d="m.7 3.500 4-2 4.500 2v2L6 8.500.7 6z" fill="#bbb" stroke="#555" stroke-width=".7"/><path d="m.7 3.500 5 2.500 3.500-2.500M2.500 2.700 7 5" fill="none" stroke="#555" stroke-width=".6"/></svg>
    </footer>
</body>
</html>
